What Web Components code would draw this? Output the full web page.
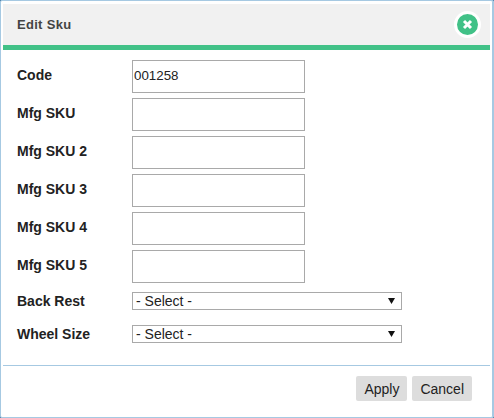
<!DOCTYPE html>
<html>
<head>
<meta charset="utf-8">
<title>Edit Sku</title>
<style>
html, body { margin: 0; height: 100%; background: #4a7fa8; overflow: hidden; }
body { font-family: "Liberation Sans", Arial, sans-serif; }
</style>
</head>
<body>
<sku-dialog heading="Edit Sku">
    <sku-field label="Code"><sku-input>001258</sku-input></sku-field>
    <sku-field label="Mfg SKU"><sku-input></sku-input></sku-field>
    <sku-field label="Mfg SKU 2"><sku-input></sku-input></sku-field>
    <sku-field label="Mfg SKU 3"><sku-input></sku-input></sku-field>
    <sku-field label="Mfg SKU 4"><sku-input></sku-input></sku-field>
    <sku-field label="Mfg SKU 5"><sku-input></sku-input></sku-field>
    <sku-field label="Back Rest" short><sku-select>- Select -</sku-select></sku-field>
    <sku-field label="Wheel Size" short><sku-select>- Select -</sku-select></sku-field>
    <sku-button slot="actions">Apply</sku-button>
    <sku-button slot="actions">Cancel</sku-button>
</sku-dialog>

<script>
const dialogTemplate = document.createElement("template");
dialogTemplate.innerHTML = `
    <style>
    :host {
        display: flex;
        flex-direction: column;
        box-sizing: border-box;
        width: 494px;
        height: 418px;
        padding: 3px 3px 1px 2px;
        background: #fff;
        border: 1px solid #a6c9e2;
        border-radius: 2px;
        box-shadow: inset -1px 0 0 #a6c9e2;
    }
    header {
        display: flex;
        justify-content: space-between;
        align-items: center;
        height: 41px;
        padding: 0 9px 0 14px;
        background: #f1f1f1;
        border-bottom: 5px solid #41c187;
        font-size: 13px;
        font-weight: bold;
        letter-spacing: 0.3px;
        color: #444;
    }
    .close {
        box-sizing: border-box;
        width: 27px;
        height: 27px;
        margin-top: -1px;
        border: 3px solid #fff;
        border-radius: 50%;
        background: #41c187;
        display: flex;
        align-items: center;
        justify-content: center;
    }
    main {
        flex: 1;
        display: flex;
        flex-direction: column;
        padding: 10px 14px 0;
    }
    footer {
        display: flex;
        justify-content: flex-end;
        gap: 5px;
        border-top: 1px solid #a6c9e2;
        padding: 10px 18px 15px 0;
    }
    </style>
    <header>
        <span id="heading"></span>
        <span class="close">
            <svg width="11" height="11" viewBox="0 0 11 11"><path d="M2 2 L9 9 M9 2 L2 9" stroke="#fff" stroke-width="3"/></svg>
        </span>
    </header>
    <main><slot></slot></main>
    <footer><slot name="actions"></slot></footer>
`;

class SkuDialog extends HTMLElement {
    constructor() {
        super();
        this.attachShadow({ mode: "open" });
    }

    connectedCallback() {
        this.shadowRoot.appendChild(dialogTemplate.content.cloneNode(true));
        this.shadowRoot.getElementById("heading").textContent = this.getAttribute("heading");
    }
}

const fieldTemplate = document.createElement("template");
fieldTemplate.innerHTML = `
    <style>
    :host {
        display: grid;
        grid-template-columns: 115px 1fr;
        align-items: center;
        height: 33px;
        margin-bottom: 5px;
    }
    :host([short]) {
        height: 18px;
        margin-top: 4px;
        margin-bottom: 11px;
    }
    label {
        margin-bottom: 4px;
        font-size: 14px;
        font-weight: bold;
        color: #222;
    }
    :host([short]) label {
        margin-bottom: 0;
    }
    </style>
    <label></label>
    <slot></slot>
`;

class SkuField extends HTMLElement {
    constructor() {
        super();
        this.attachShadow({ mode: "open" });
    }

    connectedCallback() {
        this.shadowRoot.appendChild(fieldTemplate.content.cloneNode(true));
        this.shadowRoot.querySelector("label").textContent = this.getAttribute("label");
    }
}

const inputTemplate = document.createElement("template");
inputTemplate.innerHTML = `
    <style>
    :host {
        display: flex;
        align-items: center;
        box-sizing: border-box;
        width: 173px;
        height: 33px;
        padding: 0 1px 2px;
        border: 1px solid #a9a9a9;
        background: #fff;
        font-size: 13.33px;
        color: #222;
    }
    </style>
    <slot></slot>
`;

class SkuInput extends HTMLElement {
    constructor() {
        super();
        this.attachShadow({ mode: "open" });
        this.shadowRoot.appendChild(inputTemplate.content.cloneNode(true));
    }
}

const selectTemplate = document.createElement("template");
selectTemplate.innerHTML = `
    <style>
    :host {
        display: flex;
        align-items: center;
        justify-content: space-between;
        box-sizing: border-box;
        width: 270px;
        height: 18px;
        padding: 0 6px 0 3px;
        border: 1px solid #a9a9a9;
        background: #fff;
        font-size: 14px;
        color: #222;
    }
    </style>
    <slot></slot>
    <svg width="7" height="6" viewBox="0 0 7 6"><path d="M0 0 H7 L3.5 6 Z" fill="#111"/></svg>
`;

class SkuSelect extends HTMLElement {
    constructor() {
        super();
        this.attachShadow({ mode: "open" });
        this.shadowRoot.appendChild(selectTemplate.content.cloneNode(true));
    }
}

const buttonTemplate = document.createElement("template");
buttonTemplate.innerHTML = `
    <style>
    :host {
        display: flex;
        align-items: center;
        box-sizing: border-box;
        height: 25px;
        padding: 0 8px;
        background: #ddd;
        border-radius: 2px;
        font-size: 14px;
        color: #222;
    }
    </style>
    <slot></slot>
`;

class SkuButton extends HTMLElement {
    constructor() {
        super();
        this.attachShadow({ mode: "open" });
        this.shadowRoot.appendChild(buttonTemplate.content.cloneNode(true));
    }
}

customElements.define("sku-dialog", SkuDialog);
customElements.define("sku-field", SkuField);
customElements.define("sku-input", SkuInput);
customElements.define("sku-select", SkuSelect);
customElements.define("sku-button", SkuButton);
</script>
</body>
</html>
